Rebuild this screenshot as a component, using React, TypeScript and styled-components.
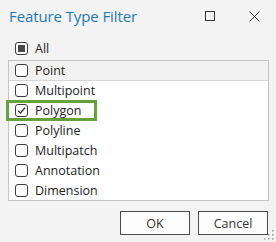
import styled, { createGlobalStyle } from "styled-components";

const GlobalStyle = createGlobalStyle`
  html, body {
    margin: 0;
    padding: 0;
    background: #f3f3f3;
  }
  * {
    box-sizing: border-box;
  }
`;

const Dialog = styled.div`
  position: relative;
  width: 276px;
  height: 242px;
  background: #f3f3f3;
  font-family: "Open Sans", "Noto Sans", sans-serif;
  color: #222;
  display: flex;
  flex-direction: column;
`;

const TitleBar = styled.div`
  height: 32px;
  display: flex;
  align-items: center;
  padding: 0 0 0 9px;
`;

const Title = styled.h1`
  flex: 1;
  margin: 0;
  font-weight: 400;
  font-size: 15px;
  color: #1f79b7;
  letter-spacing: -0.1px;
`;

const WinButton = styled.button`
  width: 44px;
  height: 32px;
  border: none;
  background: transparent;
  padding: 0;
  display: flex;
  align-items: center;
  justify-content: center;
`;

const AllRow = styled.div`
  height: 28px;
  display: flex;
  align-items: center;
  padding: 5px 0 0 15px;
  gap: 7px;
  font-size: 12.5px;
`;

const ListBox = styled.div`
  margin: 0 7px 0 8px;
  height: 141px;
  border: 1px solid #c4c4c4;
  background: #fff;
`;

const Row = styled.div<{ $focused?: boolean }>`
  height: 20px;
  display: flex;
  align-items: center;
  gap: 7px;
  padding-left: 6px;
  font-size: 12.5px;
  background: ${(p) => (p.$focused ? "#f2f2f2" : "transparent")};
  border-bottom: 1px solid ${(p) => (p.$focused ? "#d6d6d6" : "transparent")};
`;

const Box = styled.span`
  width: 13px;
  height: 13px;
  border: 1px solid #3c3c3c;
  border-radius: 3px;
  background: #fff;
  display: flex;
  align-items: center;
  justify-content: center;
  flex-shrink: 0;
`;

const Partial = styled.span`
  width: 7px;
  height: 7px;
  background: #4a4a4a;
`;

const Footer = styled.div`
  flex: 1;
  display: flex;
  justify-content: flex-end;
  align-items: flex-start;
  gap: 8px;
  padding: 10px 8px 0 0;
`;

const DialogButton = styled.button`
  width: 70px;
  height: 24px;
  border: 1px solid #4a4a4a;
  background: #fdfdfd;
  font-family: "Open Sans", "Noto Sans", sans-serif;
  font-size: 12.5px;
  color: #333;
  padding: 0;
`;

const Highlight = styled.div`
  position: absolute;
  left: 6px;
  top: 100px;
  width: 91px;
  height: 21px;
  border: 3px solid #66a23a;
  pointer-events: none;
`;

const Grip = styled.svg`
  position: absolute;
  right: 2px;
  bottom: 2px;
`;

const types = [
  "Point",
  "Multipoint",
  "Polygon",
  "Polyline",
  "Multipatch",
  "Annotation",
  "Dimension",
];

function Check({ checked }: { checked?: boolean }) {
  return (
    <Box>
      {checked && (
        <svg width="9" height="9" viewBox="0 0 9 9">
          <path d="M1 4.6 L3.4 7 L8 1.8" fill="none" stroke="#333" strokeWidth="1.3" />
        </svg>
      )}
    </Box>
  );
}

export default function App() {
  return (
    <>
      <GlobalStyle />
      <Dialog>
        <TitleBar>
          <Title>Feature Type Filter</Title>
          <WinButton>
            <svg width="11" height="11" viewBox="0 0 11 11">
              <rect x="0.5" y="0.5" width="9" height="9" fill="none" stroke="#333" />
            </svg>
          </WinButton>
          <WinButton>
            <svg width="11" height="11" viewBox="0 0 11 11">
              <path d="M0.5 0.5 L10.5 10.5 M10.5 0.5 L0.5 10.5" stroke="#333" strokeWidth="1" />
            </svg>
          </WinButton>
        </TitleBar>
        <AllRow>
          <Box>
            <Partial />
          </Box>
          All
        </AllRow>
        <ListBox>
          {types.map((t, i) => (
            <Row key={t} $focused={i === 0}>
              <Check checked={t === "Polygon"} />
              {t}
            </Row>
          ))}
        </ListBox>
        <Footer>
          <DialogButton>OK</DialogButton>
          <DialogButton>Cancel</DialogButton>
        </Footer>
        <Highlight />
        <Grip width="10" height="10" viewBox="0 0 10 10">
          {[
            [8, 0],
            [8, 4],
            [8, 8],
            [4, 4],
            [4, 8],
            [0, 8],
          ].map(([x, y]) => (
            <rect key={`${x}-${y}`} x={x} y={y} width="1.5" height="1.5" fill="#9a9a9a" />
          ))}
        </Grip>
      </Dialog>
    </>
  );
}
